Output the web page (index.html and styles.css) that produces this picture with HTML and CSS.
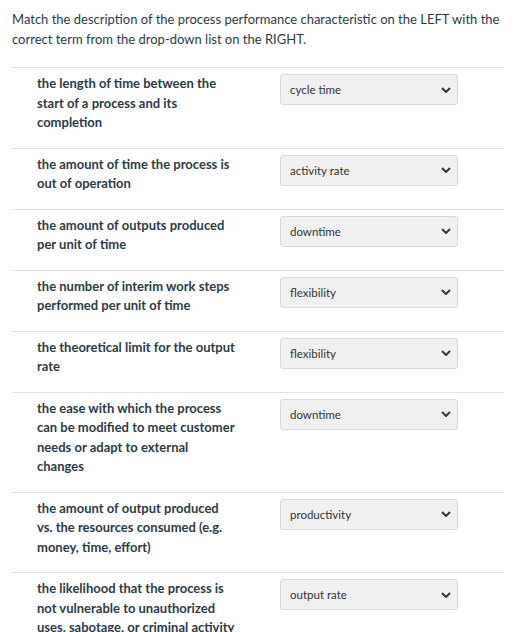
FILE: index.html
```html
<!DOCTYPE html>
<html lang="en">
<head>
<meta charset="utf-8">
<title>Matching question</title>
<link rel="stylesheet" href="styles.css">
</head>
<body>
<p class="prompt">Match the description of the process performance characteristic on the LEFT with the correct term from the drop-down list on the RIGHT.</p>
<div class="matches">
  <div class="row">
    <div class="desc">the length of time between the start of a process and its completion</div>
    <div class="select"><span>cycle time</span><svg class="chev" width="10" height="6" viewBox="0 0 10 6"><path d="M1 1 L5 5 L9 1" fill="none" stroke="currentColor" stroke-width="2"/></svg></div>
  </div>
  <div class="row">
    <div class="desc">the amount of time the process is out of operation</div>
    <div class="select"><span>activity rate</span><svg class="chev" width="10" height="6" viewBox="0 0 10 6"><path d="M1 1 L5 5 L9 1" fill="none" stroke="currentColor" stroke-width="2"/></svg></div>
  </div>
  <div class="row">
    <div class="desc">the amount of outputs produced per unit of time</div>
    <div class="select"><span>downtime</span><svg class="chev" width="10" height="6" viewBox="0 0 10 6"><path d="M1 1 L5 5 L9 1" fill="none" stroke="currentColor" stroke-width="2"/></svg></div>
  </div>
  <div class="row">
    <div class="desc">the number of interim work steps performed per unit of time</div>
    <div class="select"><span>flexibility</span><svg class="chev" width="10" height="6" viewBox="0 0 10 6"><path d="M1 1 L5 5 L9 1" fill="none" stroke="currentColor" stroke-width="2"/></svg></div>
  </div>
  <div class="row">
    <div class="desc">the theoretical limit for the output rate</div>
    <div class="select"><span>flexibility</span><svg class="chev" width="10" height="6" viewBox="0 0 10 6"><path d="M1 1 L5 5 L9 1" fill="none" stroke="currentColor" stroke-width="2"/></svg></div>
  </div>
  <div class="row">
    <div class="desc">the ease with which the process can be modified to meet customer needs or adapt to external changes</div>
    <div class="select"><span>downtime</span><svg class="chev" width="10" height="6" viewBox="0 0 10 6"><path d="M1 1 L5 5 L9 1" fill="none" stroke="currentColor" stroke-width="2"/></svg></div>
  </div>
  <div class="row">
    <div class="desc">the amount of output produced vs. the resources consumed (e.g. money, time, effort)</div>
    <div class="select"><span>productivity</span><svg class="chev" width="10" height="6" viewBox="0 0 10 6"><path d="M1 1 L5 5 L9 1" fill="none" stroke="currentColor" stroke-width="2"/></svg></div>
  </div>
  <div class="row">
    <div class="desc">the likelihood that the process is not vulnerable to unauthorized uses, sabotage, or criminal activity</div>
    <div class="select"><span>output rate</span><svg class="chev" width="10" height="6" viewBox="0 0 10 6"><path d="M1 1 L5 5 L9 1" fill="none" stroke="currentColor" stroke-width="2"/></svg></div>
  </div>
</div>
</body>
</html>
```
FILE: styles.css
```css
html, body {
  margin: 0;
  padding: 0;
  background: #ffffff;
}
body {
  font-family: Lato, "Open Sans", sans-serif;
  color: #2d3b45;
}
.prompt {
  margin: 0;
  padding: 9px 17px 0 12px;
  font-size: 13px;
  line-height: 20px;
}
.matches {
  margin: 18px 17px 0 12px;
}
.row {
  display: flex;
  align-items: flex-start;
  border-top: 1px solid #e3e3e3;
  padding: 6px 0 15px 25px;
}
.desc {
  width: 200px;
  font-size: 13px;
  font-weight: bold;
  line-height: 19.5px;
}
.select {
  margin-left: 43px;
  width: 161px;
  height: 29px;
  border: 1px solid #d9d9d9;
  border-radius: 3px;
  background: #f0f0f0;
  display: flex;
  align-items: center;
  justify-content: space-between;
  padding: 0 6px 0 9px;
  box-sizing: content-box;
  font-size: 11.5px;
  color: #333333;
}
.chev {
  color: #2d3b45;
  display: block;
}
```
